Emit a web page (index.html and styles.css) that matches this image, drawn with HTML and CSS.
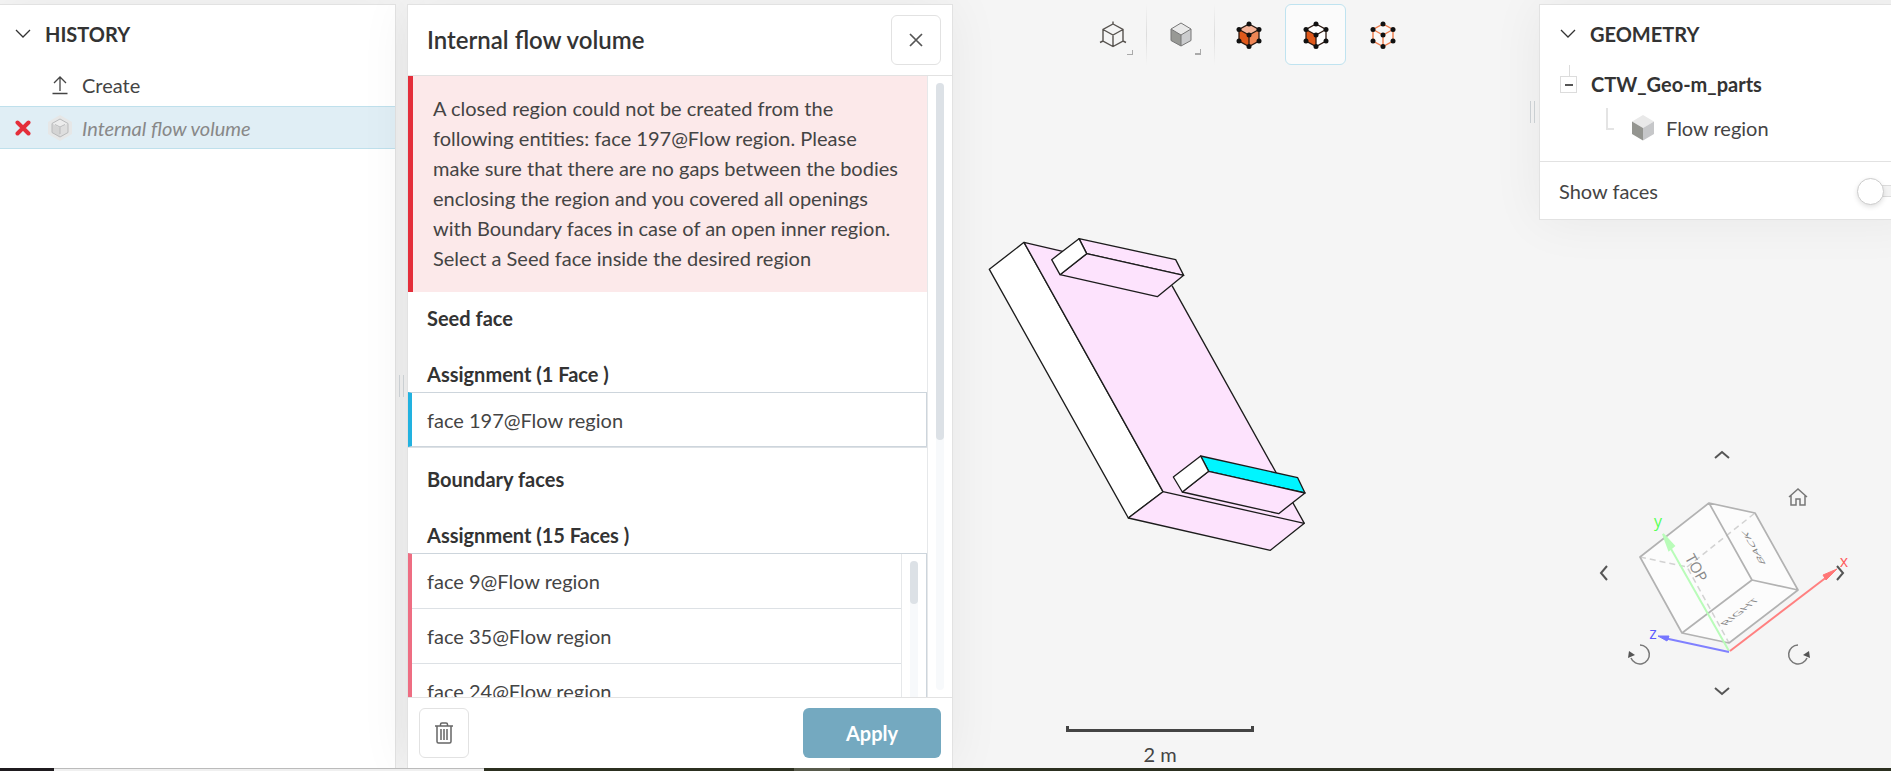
FILE: index.html
```html
<!DOCTYPE html>
<html lang="en">
<head>
    <meta charset="UTF-8">
    <meta name="viewport" content="width=device-width, initial-scale=1.0">
    <title>Internal flow volume</title>
    <link rel="stylesheet" href="styles.css">
</head>
<body>
    <div class="workspace">
        <aside class="history">
            <button type="button" class="section-toggle">
                <svg width="16" height="10" viewBox="0 0 16 10"><path d="M1 1l7 7 7-7" fill="none" stroke="#333" stroke-width="1.3"/></svg>
                HISTORY
            </button>
            <ul class="history-list">
                <li class="history-item">
                    <span class="status"></span>
                    <svg class="item-icon" width="26" height="26" viewBox="0 0 26 26"><path d="M13 19V5M7 11l6-6 6 6M5.500 21.500h15" fill="none" stroke="#444" stroke-width="1.3"/></svg>
                    <a href="#">Create</a>
                </li>
                <li class="history-item active">
                    <svg class="status" width="16" height="16" viewBox="0 0 16 16"><path d="M2.500 2.500l11 11M13.500 2.500l-11 11" stroke="#e42e3a" stroke-width="4" stroke-linecap="round"/></svg>
                    <svg class="item-icon" width="26" height="26" viewBox="0 0 26 26">
                        <path d="M13 0l12 7v12l-12 7-12-7V7z" fill="#e6e7e7"/>
                        <path d="M13 4l8 4.500-8 4.500-8-4.500z" fill="#ececec"/>
                        <path d="M5 8.500l8 4.500v9l-8-4.500z" fill="#d4d4d4"/>
                        <path d="M21 8.500L13 13v9l8-4.500z" fill="#dedede"/>
                        <path d="M13 4l8 4.500v9L13 22l-8-4.500v-9zM8 9.500l5 2.500 5-2.500M13 12v7" fill="none" stroke="#b9babb"/>
                    </svg>
                    <a href="#">Internal flow volume</a>
                </li>
            </ul>
        </aside>

        <div class="grip"></div>

        <section class="panel">
            <header class="panel-header">
                <h1>Internal flow volume</h1>
                <button type="button" class="icon-button" aria-label="Close">
                    <svg width="14" height="14" viewBox="0 0 14 14"><path d="M1 1l12 12M13 1L1 13" stroke="#555" stroke-width="1.7"/></svg>
                </button>
            </header>
            <div class="panel-body">
                <div class="panel-content">
                    <p class="alert">A closed region could not be created from the following entities: face 197@Flow region. Please make sure that there are no gaps between the bodies enclosing the region and you covered all openings with Boundary faces in case of an open inner region. Select a Seed face inside the desired region</p>
                    <div class="group">
                        <h2>Seed face</h2>
                        <h3>Assignment (1 Face )</h3>
                        <div class="assignment seed">
                            <ul>
                                <li>face 197@Flow region</li>
                            </ul>
                        </div>
                    </div>
                    <div class="group">
                        <h2>Boundary faces</h2>
                        <h3>Assignment (15 Faces )</h3>
                        <div class="assignment boundary">
                            <ul>
                                <li>face 9@Flow region</li>
                                <li>face 35@Flow region</li>
                                <li>face 24@Flow region</li>
                            </ul>
                            <div class="scroll"><div class="scroll-track"><div class="thumb short"></div></div></div>
                        </div>
                    </div>
                </div>
                <div class="scroll"><div class="scroll-track"><div class="thumb"></div></div></div>
            </div>
            <footer class="panel-footer">
                <button type="button" class="icon-button" aria-label="Delete">
                    <svg width="18" height="22" viewBox="0 0 18 22" fill="none" stroke="#666" stroke-width="1.5"><path d="M0 4h18M5.500 4V2.500Q5.500 1 7 1h4q1.500 0 1.500 1.500V4M2 4v15.500q0 1.500 1.500 1.500h11q1.500 0 1.500-1.500V4M6 7v11M9 7v11M12 7v11"/></svg>
                </button>
                <button type="button" class="apply-button">Apply</button>
            </footer>
        </section>

        <main class="viewport">
            <div class="stage">
                <div class="toolbar">
                    <button type="button" class="tool" aria-label="Wireframe">
                        <svg width="40" height="40" viewBox="0 0 40 40">
                            <path d="M20 9l10 5.500v11.500l-10 5.500-10-5.500V14.500zM10 14.500l10 5.500 10-5.500M20 20v11.500M20 6.500V9M10 26l-3 1.500M30 26l3 1.500" fill="none" stroke="#57534f" stroke-width="1.4"/>
                            <path d="M40 35v5h-6" fill="none" stroke="#aaa" stroke-width="2"/>
                        </svg>
                    </button>
                    <span class="divider"></span>
                    <button type="button" class="tool" aria-label="Solid">
                        <svg width="40" height="40" viewBox="0 0 40 40">
                            <path d="M20 8l10 6-10 6-10-6z" fill="#e9e9e9"/>
                            <path d="M10 14l10 6v11l-10-5.500z" fill="#989995"/>
                            <path d="M30 14l-10 6v11l10-5.500z" fill="#cbccce"/>
                            <path d="M20 8l10 6v11.500L20 31l-10-5.500V14zM10 14l10 6 10-6M20 20v11" fill="none" stroke="#777"/>
                            <path d="M40 34v5h-6" fill="none" stroke="#aaa" stroke-width="2"/>
                        </svg>
                    </button>
                    <span class="divider"></span>
                    <button type="button" class="tool" aria-label="Select volumes">
                        <svg width="40" height="40" viewBox="0 0 40 40">
                            <path d="M20 9l10 5.500L20 20l-10-5.500z" fill="#f6b397"/>
                            <path d="M10 14.500L20 20v11.500L10 26z" fill="#e0591b"/>
                            <path d="M30 14.500L20 20v11.500L30 26z" fill="#f08655"/>
                            <path d="M20 9l10 5.500V26l-10 5.500L10 26V14.500zM10 14.500L20 20l10-5.500M20 20v11.500" fill="none" stroke="#2d1a12" stroke-width="1.3"/>
                            <g fill="#111"><circle cx="20" cy="9" r="2.500"/><circle cx="30" cy="14.500" r="2.500"/><circle cx="30" cy="26" r="2.500"/><circle cx="20" cy="31.500" r="2.500"/><circle cx="10" cy="26" r="2.500"/><circle cx="10" cy="14.500" r="2.500"/><circle cx="20" cy="20" r="2.500"/></g>
                        </svg>
                    </button>
                    <button type="button" class="tool selected" aria-label="Select faces">
                        <svg width="40" height="40" viewBox="0 0 40 40">
                            <path d="M20 9l10 5.500V26l-10 5.500L10 26V14.500z" fill="#fff"/>
                            <path d="M10 14.500L20 20v11.500L10 26z" fill="#e0591b"/>
                            <path d="M20 9l10 5.500V26l-10 5.500L10 26V14.500zM10 14.500L20 20l10-5.500M20 20v11.500" fill="none" stroke="#2d1a12" stroke-width="1.3"/>
                            <g fill="#111"><circle cx="20" cy="9" r="2.500"/><circle cx="30" cy="14.500" r="2.500"/><circle cx="30" cy="26" r="2.500"/><circle cx="20" cy="31.500" r="2.500"/><circle cx="10" cy="26" r="2.500"/><circle cx="10" cy="14.500" r="2.500"/><circle cx="20" cy="20" r="2.500"/></g>
                        </svg>
                    </button>
                    <button type="button" class="tool" aria-label="Select edges">
                        <svg width="40" height="40" viewBox="0 0 40 40">
                            <path d="M20 9l10 5.500V26l-10 5.500L10 26V14.500zM10 14.500L20 20l10-5.500M20 20v11.500" fill="#faf7f6" stroke="#ef7a48" stroke-width="1.4"/>
                            <g fill="#111"><circle cx="20" cy="9" r="2.500"/><circle cx="30" cy="14.500" r="2.500"/><circle cx="30" cy="26" r="2.500"/><circle cx="20" cy="31.500" r="2.500"/><circle cx="10" cy="26" r="2.500"/><circle cx="10" cy="14.500" r="2.500"/><circle cx="20" cy="20" r="2.500"/></g>
                        </svg>
                    </button>
                </div>
                <svg class="model" width="350" height="350" viewBox="0 0 1050 1050" stroke="#1c1c1c" stroke-width="4" stroke-linejoin="round">
                    <path d="M162 70L58 151 475 897l104-79z" fill="#fff"/>
                    <path d="M162 70L300 98L560 150L606 200L1003 913L579 818z" fill="#fde3fd" stroke="none"/>
                    <path d="M162 70l116 27M606 200l397 713M162 70l417 748" fill="none"/>
                    <path d="M579 818l424 95-102 81-426-97z" fill="#fde3fd"/>
                    <path d="M327 59l290 63 24 47-291-65z" fill="#fde3fd"/>
                    <path d="M350 104l291 65-79 64-292-66z" fill="#fde3fd"/>
                    <path d="M327 59l23 45-80 63-25-45z" fill="#fff"/>
                    <path d="M692 711l291 65 22 46-289-65z" fill="#00f5ff"/>
                    <path d="M716 757l289 65-79 62-289-65z" fill="#fde3fd"/>
                    <path d="M692 711l24 46-79 62-27-45z" fill="#fff"/>
                </svg>
                <div class="scale">
                    <div class="scale-bar"></div>
                    <span>2 m</span>
                </div>
            </div>

            <div class="grip right"></div>

            <div class="side">
                <section class="geometry">
                    <button type="button" class="section-toggle">
                        <svg width="16" height="10" viewBox="0 0 16 10"><path d="M1 1l7 7 7-7" fill="none" stroke="#333" stroke-width="1.3"/></svg>
                        GEOMETRY
                    </button>
                    <div class="tree-row root">
                        <button type="button" class="collapse" aria-label="Collapse"></button>
                        <strong>CTW_Geo-m_parts</strong>
                    </div>
                    <div class="tree-row leaf">
                        <span class="branch"></span>
                        <svg width="22" height="26" viewBox="0 0 22 26">
                            <path d="M11 0l11 6.500-11 6.500L0 6.500z" fill="#e9e9e9"/>
                            <path d="M0 6.500L11 13v12.500L0 19z" fill="#949590"/>
                            <path d="M22 6.500L11 13v12.500L22 19z" fill="#c6c7c9"/>
                        </svg>
                        <span>Flow region</span>
                    </div>
                    <div class="faces-row">
                        <label for="showFaces">Show faces</label>
                        <input type="checkbox" id="showFaces" class="switch">
                    </div>
                </section>

                <div class="compass">
                    <svg width="260" height="260" viewBox="0 0 260 260">
                        <path d="M117 60l46 10 43 77-69 53-47-10-42-76z" fill="#fcfcfc"/>
                        <path d="M48 114l47 10 42 76M95 124l68-54" fill="none" stroke="#d2d2d2" stroke-width="1.500" stroke-dasharray="6 4"/>
                        <g class="cube-text">
                            <text transform="translate(104 125) rotate(61)" dy="5">TOP</text>
                            <text transform="matrix(-.49 -.87 .6 .13 162 105)" dy="5">BACK</text>
                            <text transform="matrix(.79 -.61 .6 .13 148 169)" dy="5">RIGHT</text>
                        </g>
                        <path d="M117 60l46 10 43 77-69 53-47-10-42-76zM117 60l43 77 46 10M160 137l-70 53" fill="none" stroke="#b2b2b2" stroke-width="1.700" stroke-linejoin="round"/>
                        <path d="M137 208L74 97" stroke="#b9fcb9" stroke-width="2"/>
                        <path d="M71 91l11 12-5 4z" fill="#b9fcb9" stroke="#b9fcb9" stroke-width="2"/>
                        <path d="M138 208L240 130" stroke="#ff8080" stroke-width="2"/>
                        <path d="M245 126l-14 6 3 5z" fill="#ff7676" stroke="#ff7676"/>
                        <path d="M137 209L72 195" stroke="#8080ff" stroke-width="2"/>
                        <path d="M66 193l11 0-2 5z" fill="#7676ff" stroke="#7676ff"/>
                        <g class="axis-text">
                            <text x="66" y="84" fill="#5f5">y</text>
                            <text x="252" y="124" fill="#ff5c5c">x</text>
                            <text x="61" y="196" fill="#5c5cff">z</text>
                        </g>
                    </svg>
                    <button type="button" class="nav up" aria-label="Rotate up"><svg width="24" height="24" viewBox="0 0 24 24"><path d="M5 15l7-6 7 6"/></svg></button>
                    <button type="button" class="nav down" aria-label="Rotate down"><svg width="24" height="24" viewBox="0 0 24 24"><path d="M5 9l7 6 7-6"/></svg></button>
                    <button type="button" class="nav left" aria-label="Rotate left"><svg width="24" height="24" viewBox="0 0 24 24"><path d="M15 5l-6 7 6 7"/></svg></button>
                    <button type="button" class="nav right" aria-label="Rotate right"><svg width="24" height="24" viewBox="0 0 24 24"><path d="M9 5l6 7-6 7"/></svg></button>
                    <button type="button" class="nav home" aria-label="Home"><svg width="24" height="24" viewBox="0 0 24 24"><path class="thin" d="M3 12l9-8 9 8M5 10v10h5v-6h4v6h5V10"/></svg></button>
                    <button type="button" class="nav roll-left" aria-label="Roll left"><svg width="24" height="24" viewBox="0 0 24 24"><path class="thin" d="M12 2a9.500 9.500 0 1 1-9 13"/><path class="head" d="M1 8l6 4-7 3z"/></svg></button>
                    <button type="button" class="nav roll-right" aria-label="Roll right"><svg width="24" height="24" viewBox="0 0 24 24"><path class="thin" d="M12 2a9.500 9.500 0 1 0 9 13"/><path class="head" d="M23 8l-6 4 7 3z"/></svg></button>
                </div>
            </div>
        </main>
    </div>
    <div class="taskbar">
        <span class="preview"></span>
        <span class="tab"></span>
    </div>
</body>
</html>
```
FILE: styles.css
```css
* {
    box-sizing: border-box;
}
body {
    display: flex;
    flex-direction: column;
    height: 100vh;
    margin: 0;
    overflow: hidden;
    background-color: #f5f5f5;
    color: #444;
    font-family: Lato, sans-serif;
    font-size: 20px;
    line-height: 30px;
}
h1, h2, h3, p, ul {
    margin: 0;
    padding: 0;
}
ul {
    list-style: none;
}
button {
    padding: 0;
    border: none;
    background: none;
    color: inherit;
    font: inherit;
    cursor: pointer;
}
svg {
    display: block;
    flex: none;
}
a {
    color: inherit;
    text-decoration: none;
}
.workspace {
    display: flex;
    flex: 1;
    min-height: 0;
    padding-top: 4px;
}

/* history */
.history {
    width: 396px;
    flex: none;
    background-color: #fff;
    border: 1px solid #e2e2e2;
    border-left: none;
    border-bottom: none;
    box-shadow: 0 0 50px rgba(0, 0, 0, 0.06);
}
.section-toggle {
    display: flex;
    align-items: center;
    gap: 14px;
    height: 58px;
    padding-left: 15px;
    font-weight: 700;
    color: #333;
}
.history-item {
    display: flex;
    align-items: center;
    height: 43px;
    padding-left: 15px;
    border: 1px solid transparent;
    border-width: 1px 0;
}
.history-item.active {
    background-color: #e0eef5;
    border-color: #bfe0ec;
    color: #888;
    font-style: italic;
}
.status {
    width: 16px;
}
.item-icon {
    margin: 0 9px 0 16px;
}
.grip {
    align-self: center;
    width: 5px;
    height: 22px;
    margin: 0 3px;
    border: 1px solid #cfd4d8;
    border-width: 0 1px;
}
.grip.right {
    align-self: start;
    margin: 97px 4px 0 3px;
}

/* settings panel */
.panel {
    display: flex;
    flex-direction: column;
    width: 546px;
    flex: none;
    background-color: #fff;
    border: 1px solid #e2e2e2;
    border-bottom: none;
    box-shadow: 0 0 50px rgba(0, 0, 0, 0.06);
}
.panel-header, .panel-footer {
    display: flex;
    align-items: center;
    justify-content: space-between;
    flex: none;
    height: 71px;
    padding: 0 11px;
}
.panel-header {
    border-bottom: 1px solid #e2e2e2;
    padding-left: 19px;
}
.panel-footer {
    border-top: 1px solid #e2e2e2;
}
h1 {
    font-size: 24px;
    font-weight: 600;
    color: #333;
}
h2, h3 {
    padding-left: 19px;
    font-size: 20px;
    font-weight: 700;
    color: #333;
}
.icon-button {
    display: grid;
    place-items: center;
    width: 50px;
    height: 50px;
    border: 1px solid #e2e2e2;
    border-radius: 6px;
}
.apply-button {
    width: 138px;
    height: 50px;
    border-radius: 6px;
    background-color: #74a9c0;
    color: #fff;
    font-weight: 700;
}
.panel-body {
    display: flex;
    flex: 1;
    min-height: 0;
    overflow: hidden;
}
.panel-content {
    flex: 1;
    overflow: hidden;
}
.alert {
    padding: 17px 20px 19px;
    border-left: 5px solid #e42e3a;
    background-color: #fce9ea;
}
.group {
    padding-top: 11px;
    margin-bottom: 6px;
}
h2 {
    margin-bottom: 26px;
}
.assignment {
    display: flex;
    margin-top: 3px;
    border: 1px solid #cdd5dc;
    border-left: 4px solid #22b2e0;
}
.assignment ul {
    flex: 1;
}
.assignment li {
    height: 55px;
    padding-left: 15px;
    line-height: 54px;
    border-bottom: 1px solid #dde1e5;
}
.seed {
    box-shadow: 0 1px 0 #dde1e5;
}
.seed li {
    height: 53px;
    border-bottom: none;
}
.boundary {
    border-left-color: #ee6d82;
}
.scroll {
    width: 25px;
    padding: 7px 8px;
    border-left: 1px solid #e6e8ea;
}
.scroll-track {
    height: 100%;
    border-radius: 4px;
    background-color: #f7f9fb;
}
.thumb {
    height: 357px;
    border-radius: 4px;
    background-color: #dce1e6;
}
.thumb.short {
    height: 43px;
}

/* 3d view */
.viewport {
    display: flex;
    flex: 1;
    min-width: 0;
}
.stage {
    display: flex;
    flex: 1;
    flex-direction: column;
    justify-content: space-between;
    align-items: center;
}
.toolbar {
    display: flex;
    align-items: center;
    gap: 6px;
    padding-left: 15px;
}
.tool {
    display: grid;
    place-items: center;
    width: 61px;
    height: 61px;
    border: 1px solid transparent;
    border-radius: 6px;
}
.tool.selected {
    border-color: #bfe3f0;
    background-color: #fbfbfb;
}
.divider {
    width: 1px;
    height: 61px;
    margin: 0 -3px;
    background: linear-gradient(transparent, #dcdcdc, transparent);
}
.model {
    margin: 0 0 4px -190px;
}
.scale {
    display: flex;
    flex-direction: column;
    align-items: center;
    gap: 7px;
    margin: 0 0 -1px -160px;
}
.scale-bar {
    width: 188px;
    height: 6px;
    border: 3px solid #444;
    border-top: none;
}
.side {
    display: flex;
    flex-direction: column;
    justify-content: space-between;
    width: 352px;
    flex: none;
}

/* geometry */
.geometry {
    margin-right: -32px;
    background-color: #fff;
    border: 1px solid #e2e2e2;
    box-shadow: 0 0 50px rgba(0, 0, 0, 0.06);
}
.geometry .section-toggle {
    padding-left: 20px;
}
.tree-row {
    display: flex;
    align-items: center;
    padding-left: 20px;
}
.root {
    height: 42px;
}
.tree-row strong {
    font-weight: 700;
    color: #333;
}
.collapse {
    position: relative;
    width: 17px;
    height: 17px;
    margin-right: 14px;
    border: 1px solid #dcdcdc;
}
.collapse::before {
    content: "";
    position: absolute;
    left: 8px;
    top: -12px;
    width: 1px;
    height: 11px;
    background-color: #dcdcdc;
}
.collapse::after {
    content: "";
    position: absolute;
    left: 4px;
    top: 7px;
    width: 8px;
    height: 2px;
    background-color: #555;
}
.leaf {
    height: 47px;
    padding-left: 66px;
}
.branch {
    width: 8px;
    height: 22px;
    margin: 0 18px 20px 0;
    border: 2px solid #e4e4e4;
    border-width: 0 0 2px 2px;
}
.leaf svg {
    margin-right: 12px;
}
.leaf svg, .leaf span:last-child {
    margin-bottom: 2px;
}
.faces-row {
    display: flex;
    align-items: center;
    justify-content: space-between;
    height: 58px;
    padding: 0 11px 0 19px;
    margin-top: 9px;
    border-top: 1px solid #e2e2e2;
}
.switch {
    appearance: none;
    position: relative;
    width: 54px;
    height: 25px;
    margin: 0;
}
.switch::before {
    content: "";
    position: absolute;
    inset: 7px 0 6px 8px;
    border: 1px solid #dcdcdc;
    border-radius: 6px;
    background-color: #f3f3f3;
}
.switch::after {
    content: "";
    position: absolute;
    left: 0;
    top: 0;
    width: 25px;
    height: 25px;
    border: 1px solid #ccc;
    border-radius: 50%;
    background-color: #fff;
    box-shadow: 0 2px 5px rgba(0, 0, 0, 0.12);
}

/* orientation cube, the buttons lie over the drawing */
.compass {
    position: relative;
    width: 260px;
    height: 260px;
    margin: 0 0 65px 53px;
}
.cube-text {
    fill: #888;
    font-family: "Open Sans", sans-serif;
    font-size: 15px;
    text-anchor: middle;
}
.axis-text {
    font-family: "Open Sans", sans-serif;
    font-size: 16px;
    text-anchor: middle;
}
.nav {
    position: absolute;
    width: 24px;
    height: 24px;
}
.nav path {
    fill: none;
    stroke: #555;
    stroke-width: 2;
}
.nav .thin {
    stroke: #777;
    stroke-width: 1.5;
}
.nav .head {
    fill: #555;
    stroke: none;
}
.up {
    left: 118px;
    top: 0;
}
.down {
    left: 118px;
    bottom: 0;
}
.left {
    left: 0;
    top: 118px;
}
.nav.right {
    right: 0;
    top: 118px;
}
.home {
    left: 194px;
    top: 42px;
}
.roll-left {
    left: 36px;
    top: 200px;
}
.roll-right {
    left: 194px;
    top: 200px;
}

/* strip along the bottom edge */
.taskbar {
    position: relative;
    display: flex;
    flex: none;
    height: 3px;
    padding-left: 54px;
    background: linear-gradient(90deg, #1f1b1f 54px, #2c3020 54px);
}
.preview {
    width: 430px;
    background-color: #f0f0f0;
    border-top: 1px solid #bbb;
}
.tab {
    width: 56px;
    margin-left: 310px;
    background-color: #575a4b;
}
```
